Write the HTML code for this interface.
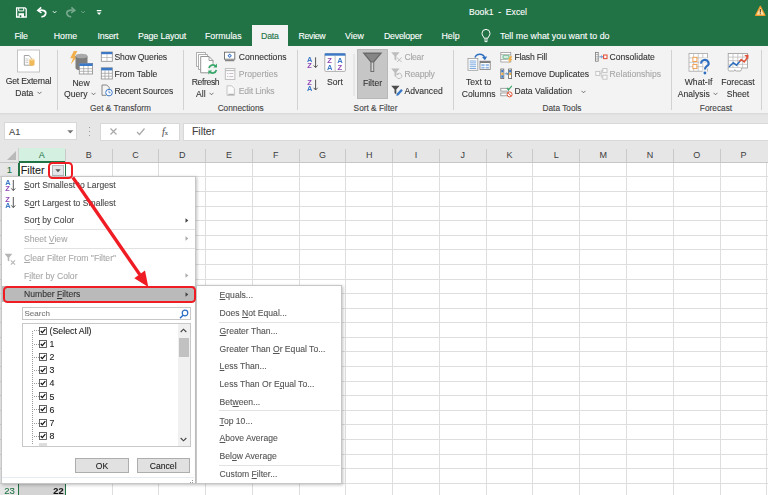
<!DOCTYPE html>
<html><head><meta charset="utf-8"><title>Excel Number Filters</title>
<style>
html,body{margin:0;padding:0}
body{width:768px;height:495px;overflow:hidden;position:relative;background:#fff;font-family:"Liberation Sans",sans-serif}
#r{position:absolute;left:-8px;top:-8px;width:784px;height:511px;filter:blur(0.3px)}
#i{position:absolute;left:8px;top:8px;width:768px;height:495px}
#i>div,#i>span,#i>svg{position:absolute;display:block}
.t{height:12px;line-height:12px;white-space:nowrap;-webkit-text-stroke:0.1px currentColor}
.ch{display:inline-block;vertical-align:1px;margin-left:1px}
u{text-decoration-thickness:0.6px;text-underline-offset:1px}
</style></head><body><div id="r"><div id="i">
<div style="left:-8px;top:-8px;width:784px;height:54.5px;background:#217346"></div>
<div style="left:252px;top:25px;width:36px;height:22px;background:#f3f3f3"></div>
<span class="t" style="left:14.5px;top:29.5px;font-size:8.8px;color:#fff;letter-spacing:-0.25px">File</span>
<span class="t" style="left:53.7px;top:29.5px;font-size:8.8px;color:#fff">Home</span>
<span class="t" style="left:97.5px;top:29.5px;font-size:8.8px;color:#fff;letter-spacing:-0.2px">Insert</span>
<span class="t" style="left:138px;top:29.5px;font-size:8.8px;color:#fff;letter-spacing:-0.12px">Page Layout</span>
<span class="t" style="left:205px;top:29.5px;font-size:8.8px;color:#fff">Formulas</span>
<span class="t" style="left:261px;top:29.5px;font-size:8.8px;color:#217346;letter-spacing:-0.2px">Data</span>
<span class="t" style="left:298.5px;top:29.5px;font-size:8.8px;color:#fff;letter-spacing:-0.33px">Review</span>
<span class="t" style="left:345px;top:29.5px;font-size:8.8px;color:#fff">View</span>
<span class="t" style="left:384px;top:29.5px;font-size:8.8px;color:#fff;letter-spacing:-0.23px">Developer</span>
<span class="t" style="left:441.5px;top:29.5px;font-size:8.8px;color:#fff">Help</span>
<span class="t" style="left:500px;top:29.5px;font-size:8.9px;color:#fff">Tell me what you want to do</span>
<span class="t" style="left:438.0px;width:120px;text-align:center;top:6.0px;font-size:8.6px;color:#fff">Book1&nbsp; -&nbsp; Excel</span>
<svg style="left:15px;top:6px" width="90" height="13" viewBox="15 6 90 13">
<g fill="none" stroke="#fff">
<path d="M16.600 7.800h8.400l1.200 1.200v8h-9.600z" stroke-width="1.300"/>
<path d="M18.700 8v2.900h5v-2.900" stroke-width="1"/>
<path d="M18.600 13.200h5.400v4h-5.400z" fill="#fff" stroke="none"/>
<path d="M19.800 15.200h1.500v2h-1.500z" fill="#217346" stroke="none"/>
<path d="M38.600 10.500C42.500 9.500 46.600 10.600 45.600 14C45 15.700 43.600 16.700 41.400 16.900" stroke-width="1.700"/>
<path d="M41.200 7.300L37.800 10.500L41.500 12.900" stroke-width="1.600"/>
<path d="M52.900 11.200l1.700 1.700l1.700-1.700" stroke-width="1"/>
<g opacity=".38">
<g transform="translate(-2.200 0)"><path d="M76.200 10.500C72.300 9.500 68.200 10.600 69.200 14C69.800 15.700 71.200 16.700 73.400 16.900" stroke-width="1.700"/>
<path d="M73.600 7.300L77 10.500L73.300 12.900" stroke-width="1.600"/></g>
<path d="M81.400 11.200l1.700 1.700l1.700-1.700" stroke-width="1"/>
</g>
</g>
<path d="M96.800 10.100h4.600v1.200h-4.600zM96.900 12.500h4.400l-2.200 2.400z" fill="#fff"/>
</svg>
<svg style="left:480px;top:28px" width="12" height="15" viewBox="0 0 12 15"><g fill="none" stroke="#fff" stroke-width="1"><path d="M4 10.2c0-1.6-2-2.4-2-4.8a4 4 0 0 1 8 0c0 2.400-2 3.200-2 4.800z"/><path d="M4.200 12h3.600M4.600 13.600h2.800"/></g></svg>
<svg style="left:754px;top:5px" width="13" height="12" viewBox="0 0 13 12"><path d="M6.300 1.300L11 10.300H1.600z" fill="#fbe0a2" stroke="#f29a2a" stroke-width="1.200" stroke-linejoin="round"/><path d="M5.800 4h1v3.600h-1zM5.800 8.200h1v1h-1z" fill="#3a3020"/></svg>
<div style="left:-8px;top:46px;width:784px;height:67.5px;background:#f3f3f3"></div>
<div style="left:-8px;top:113px;width:784px;height:1.5px;background:linear-gradient(#d8d8d8,#e2e2e2)"></div>
<div style="left:-8px;top:114.5px;width:784px;height:33px;background:#e6e6e6"></div>
<div style="left:57.0px;top:50px;width:1px;height:60px;background:#d2d2d2"></div>
<div style="left:183.2px;top:50px;width:1px;height:60px;background:#d2d2d2"></div>
<div style="left:297.0px;top:50px;width:1px;height:60px;background:#d2d2d2"></div>
<div style="left:453.2px;top:50px;width:1px;height:60px;background:#d2d2d2"></div>
<div style="left:671.0px;top:50px;width:1px;height:60px;background:#d2d2d2"></div>
<div style="left:761.2px;top:50px;width:1px;height:60px;background:#d2d2d2"></div>
<span class="t" style="left:60.5px;width:120px;text-align:center;top:101.5px;font-size:8.3px;color:#444">Get &amp; Transform</span>
<span class="t" style="left:180.7px;width:120px;text-align:center;top:101.5px;font-size:8.3px;color:#444">Connections</span>
<span class="t" style="left:315.5px;width:120px;text-align:center;top:101.5px;font-size:8.3px;color:#444">Sort &amp; Filter</span>
<span class="t" style="left:502.0px;width:120px;text-align:center;top:101.5px;font-size:8.3px;color:#444">Data Tools</span>
<span class="t" style="left:656.0px;width:120px;text-align:center;top:101.5px;font-size:8.3px;color:#444">Forecast</span>
<span class="t" style="left:-31.5px;width:120px;text-align:center;top:74.7px;font-size:8.6px;color:#333;letter-spacing:-0.19px">Get External</span>
<span class="t" style="left:-31.5px;width:120px;text-align:center;top:86.5px;font-size:8.6px;color:#333">Data <svg class="ch" width="5" height="4" viewBox="0 0 5 4"><path d="M0.500 0.800l2 2l2-2" fill="none" stroke="#555" stroke-width=".8"/></svg></span>
<span class="t" style="left:21.0px;width:120px;text-align:center;top:76.5px;font-size:8.6px;color:#333">New</span>
<span class="t" style="left:20.0px;width:120px;text-align:center;top:87.7px;font-size:8.6px;color:#333">Query <svg class="ch" width="5" height="4" viewBox="0 0 5 4"><path d="M0.500 0.800l2 2l2-2" fill="none" stroke="#555" stroke-width=".8"/></svg></span>
<span class="t" style="left:145.5px;width:120px;text-align:center;top:76.0px;font-size:8.6px;color:#333;letter-spacing:-0.38px">Refresh</span>
<span class="t" style="left:145.0px;width:120px;text-align:center;top:87.7px;font-size:8.6px;color:#333">All <svg class="ch" width="5" height="4" viewBox="0 0 5 4"><path d="M0.500 0.800l2 2l2-2" fill="none" stroke="#555" stroke-width=".8"/></svg></span>
<span class="t" style="left:275.0px;width:120px;text-align:center;top:76.0px;font-size:8.6px;color:#333">Sort</span>
<div style="left:357px;top:48.5px;width:31px;height:50.5px;background:#c6c6c6;border:1px solid #b8b8b8;box-sizing:border-box"></div>
<span class="t" style="left:312.5px;width:120px;text-align:center;top:76.5px;font-size:8.6px;color:#333">Filter</span>
<span class="t" style="left:418.7px;width:120px;text-align:center;top:76.0px;font-size:8.6px;color:#333">Text to</span>
<span class="t" style="left:418.7px;width:120px;text-align:center;top:87.7px;font-size:8.6px;color:#333">Columns</span>
<span class="t" style="left:638.6px;width:120px;text-align:center;top:76.0px;font-size:8.6px;color:#333">What-If</span>
<span class="t" style="left:638.0px;width:120px;text-align:center;top:88.0px;font-size:8.6px;color:#333">Analysis <svg class="ch" width="5" height="4" viewBox="0 0 5 4"><path d="M0.500 0.800l2 2l2-2" fill="none" stroke="#555" stroke-width=".8"/></svg></span>
<span class="t" style="left:678.0px;width:120px;text-align:center;top:76.0px;font-size:8.6px;color:#333">Forecast</span>
<span class="t" style="left:678.0px;width:120px;text-align:center;top:88.0px;font-size:8.6px;color:#333">Sheet</span>
<span class="t" style="left:114.5px;top:51.4px;font-size:8.6px;color:#333;letter-spacing:-0.12px">Show Queries</span>
<span class="t" style="left:114.5px;top:68.2px;font-size:8.6px;color:#333">From Table</span>
<span class="t" style="left:114.5px;top:85.2px;font-size:8.6px;color:#333;letter-spacing:-0.19px">Recent Sources</span>
<span class="t" style="left:238.7px;top:51.4px;font-size:8.6px;color:#333">Connections</span>
<span class="t" style="left:238.7px;top:68.3px;font-size:8.6px;color:#a6a6a6">Properties</span>
<span class="t" style="left:238.7px;top:85.3px;font-size:8.6px;color:#a6a6a6;letter-spacing:-0.15px">Edit Links</span>
<span class="t" style="left:404.5px;top:51.4px;font-size:8.6px;color:#a6a6a6;letter-spacing:-0.26px">Clear</span>
<span class="t" style="left:404.5px;top:68.3px;font-size:8.6px;color:#a6a6a6;letter-spacing:-0.2px">Reapply</span>
<span class="t" style="left:404.5px;top:85.3px;font-size:8.6px;color:#333">Advanced</span>
<span class="t" style="left:514.5px;top:51.4px;font-size:8.6px;color:#333;letter-spacing:-0.19px">Flash Fill</span>
<span class="t" style="left:514.5px;top:68.3px;font-size:8.6px;color:#333">Remove Duplicates</span>
<span class="t" style="left:514.5px;top:85.3px;font-size:8.6px;color:#333">Data Validation</span>
<svg style="left:580.5px;top:89.5px" width="5" height="4" viewBox="0 0 5 4"><path d="M0.500 0.800l2 2l2-2" fill="none" stroke="#555" stroke-width=".8"/></svg>
<span class="t" style="left:609.5px;top:51.4px;font-size:8.6px;color:#333">Consolidate</span>
<span class="t" style="left:609.5px;top:68.3px;font-size:8.6px;color:#a6a6a6">Relationships</span>
<svg style="left:0;top:46px" width="768" height="68" viewBox="0 46 768 68" font-family="Liberation Sans, sans-serif">
<!-- Get External Data -->
<rect x="17.500" y="50" width="22" height="22" fill="#fff" stroke="#c4c4c4" stroke-width="1"/>
<path d="M24.300 55.500h4.600l2.400 2.400v7.300h-7z" fill="#fff" stroke="#8a8a8a" stroke-width=".8"/>
<path d="M25.500 59h3M25.500 60.800h3M25.500 62.600h3" stroke="#b5b5b5" stroke-width=".7"/>
<path d="M29.300 59.600v5.200a2.600 1.100 0 0 0 5.200 0v-5.200z" fill="#f0b95a"/><ellipse cx="31.900" cy="59.600" rx="2.600" ry="1.100" fill="#f7d79a"/>
<!-- New Query -->
<path d="M73.800 51l3.600 0l-2.600 5h2.600l-6.600 8.500l2.200-6.200h-2.800z" fill="#f2b04c"/>
<path d="M75.500 56v12a6 2.300 0 0 0 12 0v-12z" fill="#7d7d7d"/><ellipse cx="81.500" cy="56" rx="6" ry="2.300" fill="#a9a9a9"/>
<rect x="79.300" y="63.400" width="13.300" height="10.600" fill="#fff" stroke="#8a8a8a" stroke-width=".8"/>
<rect x="79.300" y="63.400" width="13.300" height="2.600" fill="#3b78c6"/>
<path d="M79.300 68.700h13.300M79.300 71.300h13.300M83.700 66v8M88.100 66v8" stroke="#9a9a9a" stroke-width=".7"/>
<!-- Show Queries -->
<rect x="101.300" y="52" width="11" height="9.300" fill="#fff" stroke="#8a8a8a" stroke-width=".8"/>
<rect x="101.300" y="52" width="11" height="2.200" fill="#3b78c6"/>
<path d="M101.300 57.500h11M107 54.200v7" stroke="#b0b0b0" stroke-width=".7"/>
<!-- From Table -->
<rect x="101.300" y="67.800" width="11" height="11.200" fill="#fff" stroke="#8a8a8a" stroke-width=".8"/>
<rect x="101.300" y="67.800" width="11" height="2.600" fill="#3b78c6"/>
<path d="M101.300 73.300h11M101.300 76.200h11M105 70.400v8.600M108.700 70.400v8.600" stroke="#9a9a9a" stroke-width=".7"/>
<!-- Recent Sources -->
<path d="M102 85h4.800l2.400 2.400v2M102 85v10.300h4" fill="none" stroke="#7a7a7a" stroke-width=".9"/>
<circle cx="109" cy="92.600" r="3.300" fill="#fff" stroke="#3b78c6" stroke-width="1"/><path d="M109 90.600v2.200h1.600" fill="none" stroke="#3b78c6" stroke-width=".8"/>
<!-- Refresh All -->
<path d="M196.500 52.500h9v14h-9z" fill="#fff" stroke="#9a9a9a" stroke-width=".8"/>
<path d="M198.500 54.500h9v15h-9z" fill="#fff" stroke="#9a9a9a" stroke-width=".8"/>
<path d="M200.700 56.500h8.300l4 4v12.300h-12.300z" fill="#fff" stroke="#8a8a8a" stroke-width=".9"/>
<path d="M209 56.500v4h4" fill="none" stroke="#8a8a8a" stroke-width=".8"/>
<circle cx="212.700" cy="69" r="5.400" fill="#f3f3f3"/>
<path d="M209 68a3.900 3.900 0 0 1 6.800-1.600" fill="none" stroke="#3aa66a" stroke-width="1.700"/><path d="M217 63.600v3.800h-3.700z" fill="#3aa66a"/>
<path d="M216.400 70a3.900 3.900 0 0 1-6.800 1.600" fill="none" stroke="#3aa66a" stroke-width="1.700"/><path d="M208.400 74.400v-3.800h3.700z" fill="#3aa66a"/>
<!-- Connections -->
<rect x="224.500" y="52.200" width="10.300" height="7" fill="#fff" stroke="#6a6a6a" stroke-width=".9"/>
<path d="M225 60.700h9.300" stroke="#6a6a6a" stroke-width="1"/>
<path d="M229.700 53.500l2.200 2.200l-2.200 2.200l-2.200-2.200z" fill="#3b78c6"/><circle cx="229.700" cy="55.700" r=".8" fill="#fff"/>
<!-- Properties -->
<rect x="225.300" y="68.600" width="9.600" height="10.800" fill="#fafafa" stroke="#b9b9b9" stroke-width=".9"/>
<path d="M225.300 70.600h9.600" stroke="#b9b9b9" stroke-width="1"/>
<path d="M227 73.500h1.300M229.300 73.500h4M227 76.500h1.300M229.300 76.500h4" stroke="#c4b8c4" stroke-width=".9"/>
<!-- Edit Links -->
<path d="M227 85.800h4.600l2.800 2.800v6.800h-7.400z" fill="#fafafa" stroke="#c0c0c0" stroke-width=".9"/>
<path d="M228.300 94.300h2.200M231.600 94.300h2.200M229.700 94.300h2.600" stroke="#b0b0b0" stroke-width="1.300"/>
<!-- AZ / ZA -->
<g font-weight="bold" font-size="7.4">
<text x="306.9" y="62.2" fill="#3b78c6">A</text><text x="307.2" y="68.3" fill="#9148b5">Z</text>
<text x="307.2" y="84.600" fill="#9148b5">Z</text><text x="306.9" y="90.700" fill="#3b78c6">A</text>
</g>
<path d="M315.600 57.300v10.200M313.600 65.400l2 2.200l2-2.200M315.600 79.700v10.200M313.600 87.800l2 2.200l2-2.200" fill="none" stroke="#555" stroke-width="1"/>
<!-- Sort -->
<rect x="324.800" y="53.600" width="20.600" height="17.800" rx="1" fill="#fff" stroke="#9a9a9a" stroke-width=".8"/>
<rect x="324.800" y="53.300" width="20.600" height="2.400" fill="#3b78c6"/>
<path d="M335.100 55.700v15.700" stroke="#b0b0b0" stroke-width=".8"/>
<g font-weight="bold" font-size="7.6">
<text x="327.300" y="63.300" fill="#9148b5">Z</text><text x="327" y="70.100" fill="#3b78c6">A</text>
<text x="337.300" y="63.300" fill="#3b78c6">A</text><text x="337.600" y="70.100" fill="#9148b5">Z</text>
</g>
<path d="M354 54v42" stroke="#dcdcdc" stroke-width="1"/>
<!-- Filter funnel -->
<path d="M362.4 52.500h20l-8.200 9.800v9.700h-3.800v-9.700z" fill="#6a6a6a"/>
<path d="M365.400 54h14l-6.200 7.400h-1.600z" fill="#868686"/>
<path d="M371.500 62.500v8.600h1.800v-8.600z" fill="#d4d4d4"/>
<!-- small funnels -->
<g fill="#bdbdbd">
<path d="M391.200 52.200h8.400l-3.300 3.800v4.800l-1.800-1.300v-3.500z"/>
<path d="M391.200 68.600h8.400l-3.300 3.800v4.800l-1.800-1.300v-3.500z"/>
</g>
<path d="M397 57.500l4.600 4.600M401.600 57.500l-4.600 4.600" stroke="#bdbdbd" stroke-width="1" fill="none"/>
<path d="M396.600 77a2.700 2.700 0 1 0 1-3.300" fill="none" stroke="#bdbdbd" stroke-width="1"/><path d="M396.600 72.600v2.400h2.400z" fill="#bdbdbd"/>
<path d="M391.200 85.800h8.400l-3.300 3.800v4.800l-1.800-1.300v-3.500z" fill="#4d4d4d"/>
<path d="M396.300 96l0.600-2.400l4.200-4.600l1.700 1.600l-4.200 4.600z" fill="#3b78c6"/>
<!-- Text to Columns -->
<rect x="468" y="58.500" width="9.800" height="11.800" fill="#fff" stroke="#9a9a9a" stroke-width=".8"/>
<path d="M469.600 61h6.600M469.600 62.900h6.600M469.600 64.800h6.600M469.600 66.700h6.600M469.600 68.500h6.600" stroke="#5a93d6" stroke-width=".8"/>
<rect x="480" y="61.200" width="10.200" height="8.400" fill="#fff" stroke="#7a7a7a" stroke-width=".8"/>
<rect x="480" y="61.200" width="10.200" height="1.800" fill="#7a7a7a"/>
<rect x="481.300" y="64.200" width="3.300" height="1.700" fill="#8db5e4"/><rect x="485.600" y="64.200" width="3.300" height="1.700" fill="#8db5e4"/>
<rect x="481.300" y="66.800" width="3.300" height="1.700" fill="#8db5e4"/><rect x="485.600" y="66.800" width="3.300" height="1.700" fill="#8db5e4"/>
<path d="M475 57.500a5 4.600 0 0 1 9.600 0" fill="none" stroke="#2f6fc0" stroke-width="1.500"/>
<path d="M482 57l2.900 3.200l2.300-3.800z" fill="#2f6fc0"/>
<!-- Flash Fill -->
<rect x="500.800" y="52.400" width="10" height="9.600" fill="#fff" stroke="#9a9a9a" stroke-width=".8"/>
<path d="M500.800 54.600h10M500.800 59.500h7" stroke="#9a9a9a" stroke-width=".7"/>
<rect x="503" y="55.800" width="6" height="2.400" fill="#fff" stroke="#3aa66a" stroke-width=".8"/>
<path d="M509.800 56.200l2.600 0l-1.600 2.800h1.600l-4 4.800l1.200-3.400h-1.700z" fill="#f2b04c"/>
<!-- Remove Duplicates -->
<rect x="500.800" y="69" width="3" height="9.600" fill="#fff" stroke="#666" stroke-width=".8"/>
<rect x="508.600" y="69" width="3" height="9.600" fill="#fff" stroke="#666" stroke-width=".8"/>
<rect x="501.300" y="70" width="2" height="2.500" fill="#3b78c6"/><rect x="501.300" y="72.700" width="2" height="2.400" fill="#f2b04c"/><rect x="501.300" y="75.300" width="2" height="2.500" fill="#3b78c6"/>
<rect x="509.100" y="70" width="2" height="2.500" fill="#3b78c6"/><rect x="509.100" y="72.700" width="2" height="2.400" fill="#f2b04c"/>
<path d="M504.800 73.800h3M506.600 72.500l1.300 1.300l-1.300 1.300" fill="none" stroke="#3b78c6" stroke-width=".8"/>
<!-- Data Validation -->
<rect x="500.800" y="88.300" width="7.600" height="2.800" fill="#fff" stroke="#8a8a8a" stroke-width=".8"/>
<rect x="500.800" y="93" width="7.600" height="2.800" fill="#fff" stroke="#8a8a8a" stroke-width=".8"/>
<path d="M506.800 88l1.700 1.800l3.300-4" fill="none" stroke="#3aa66a" stroke-width="1.200"/>
<circle cx="509.600" cy="94.400" r="2.500" fill="#fff" stroke="#e0533a" stroke-width="1"/><path d="M507.900 92.700l3.400 3.400" stroke="#e0533a" stroke-width="1"/>
<!-- Consolidate -->
<rect x="595.600" y="52.400" width="2.600" height="8.800" fill="#fff" stroke="#7a7a7a" stroke-width=".8"/>
<path d="M595.600 54.600h2.600M595.600 56.800h2.600M595.600 59h2.600" stroke="#7a7a7a" stroke-width=".6"/>
<path d="M599.400 56.800h3M601.300 55.600l1.300 1.200l-1.300 1.200" fill="none" stroke="#3b78c6" stroke-width=".8"/>
<rect x="603.600" y="55" width="3.400" height="3.600" fill="#fff" stroke="#e0533a" stroke-width="1.100"/>
<!-- Relationships -->
<g fill="#fafafa" stroke="#c0c0c0" stroke-width=".9">
<rect x="595.800" y="71.400" width="4" height="4"/><rect x="602.800" y="68.600" width="4.200" height="4"/><rect x="602.800" y="75.200" width="4.200" height="4"/>
</g>
<path d="M599.800 73.400h1.500v-2.800h1.500M601.300 73.400v3.800h1.500" fill="none" stroke="#c0c0c0" stroke-width=".8"/>
<!-- What-If -->
<rect x="689" y="53.500" width="18.500" height="17.700" fill="#fff" stroke="#a6a6a6" stroke-width=".8"/>
<path d="M689 57.900h18.500M689 62.300h18.500M689 66.700h18.500M693.600 53.500v17.700M698.200 53.500v17.700M702.800 53.500v17.700" stroke="#b5b5b5" stroke-width=".7"/>
<rect x="692.900" y="57.300" width="4" height="4.200" fill="#fff" stroke="#f0a050" stroke-width="1"/>
<rect x="692.900" y="64.400" width="4" height="4.200" fill="#fff" stroke="#f0a050" stroke-width="1"/>
<path d="M701.200 63.600a3.700 3.400 0 1 1 5.600 2.600c-1.400 1-1.900 1.600-1.900 3.400v3.400" fill="none" stroke="#f3f3f3" stroke-width="4.400"/>
<path d="M701.200 63.600a3.700 3.400 0 1 1 5.600 2.600c-1.400 1-1.900 1.600-1.900 3.400" fill="none" stroke="#2f6fc0" stroke-width="2.100"/>
<circle cx="704.900" cy="73" r="1.400" fill="#2f6fc0"/>
<!-- Forecast Sheet -->
<rect x="728.200" y="53.500" width="19.300" height="14.500" fill="#fff" stroke="#9a9a9a" stroke-width=".8"/>
<path d="M728.200 57.100h19.300M728.200 60.700h19.300M728.200 64.300h19.300M733 53.500v14.500M737.800 53.500v14.500M742.600 53.500v14.500" stroke="#b5b5b5" stroke-width=".7"/>
<path d="M728.200 68v1.600q0 1.400 1.400 1.400h3.800q1.400 0 1.400-1.400q0 1.400 1.400 1.400h3.800q1.400 0 1.400-1.400v-1.600" fill="#fff" stroke="#9a9a9a" stroke-width=".8"/>
<path d="M729 67l4.300-4.200l3.200 2.400l3.600-4.300" fill="none" stroke="#2f6fc0" stroke-width="1.500"/>
<path d="M739.600 61.400l1.600-1.900l3 2.400l3.200-4.400" fill="none" stroke="#e0533a" stroke-width="1.500"/>
<path d="M744.300 55.100l4.300-.3l-.3 4.400z" fill="#e0533a"/>
</svg>

<div style="left:4px;top:122.3px;width:73px;height:18.2px;background:#fff;border:1px solid #d8d8d8;box-sizing:border-box"></div>
<span class="t" style="left:9px;top:125.5px;font-size:9.2px;color:#444">A1</span>
<svg style="left:67px;top:129.500px" width="7" height="4" viewBox="0 0 7 4"><path d="M0.300 0.300h6l-3 3.200z" fill="#777"/></svg>
<div style="left:88.5px;top:126.5px;width:1px;height:1.2px;background:#999"></div>
<div style="left:88.5px;top:130.5px;width:1px;height:1.2px;background:#999"></div>
<div style="left:88.5px;top:134.5px;width:1px;height:1.2px;background:#999"></div>
<div style="left:100px;top:122.5px;width:80px;height:18px;background:#fff;border:1px solid #d8d8d8;box-sizing:border-box"></div>
<svg style="left:108px;top:126.500px" width="70" height="10" viewBox="0 0 70 10"><g fill="none" stroke="#a8a8a8" stroke-width="1.200"><path d="M2.500 1.500l6 6M8.500 1.500l-6 6"/><path d="M29 5l2.500 2.500l5-6"/></g></svg>
<span class="t" style="left:162px;top:125.5px;font-size:10px;color:#555;font-family:'Liberation Serif',serif"><i>f</i><span style='font-size:6.500px'>x</span></span>
<div style="left:183px;top:122.5px;width:598px;height:18px;background:#fff;border:1px solid #d8d8d8;box-sizing:border-box"></div>
<span class="t" style="left:192px;top:125.5px;font-size:10.4px;color:#444">Filter</span>
<div style="left:-8px;top:147.5px;width:784px;height:355.5px;background:#fff"></div>
<div style="left:-8px;top:147.5px;width:784px;height:14.9px;background:#e6e6e6"></div>
<div style="left:-8px;top:147.5px;width:26.3px;height:355.5px;background:#e6e6e6"></div>
<div style="left:18.5px;top:148px;width:46.77px;height:14px;background:#d3f0e0"></div>
<div style="left:18.5px;top:161.2px;width:47.27px;height:1.6px;background:#217346"></div>
<span class="t" style="left:21.885000000000005px;width:40px;text-align:center;top:149.0px;font-size:9px;-webkit-text-stroke:0;color:#217346">A</span>
<span class="t" style="left:68.65500000000002px;width:40px;text-align:center;top:149.0px;font-size:9px;-webkit-text-stroke:0;color:#3c3c3c">B</span>
<div style="left:64.77000000000001px;top:149px;width:1px;height:13.4px;background:#c9c9c9"></div>
<span class="t" style="left:115.42500000000001px;width:40px;text-align:center;top:149.0px;font-size:9px;-webkit-text-stroke:0;color:#3c3c3c">C</span>
<div style="left:111.54px;top:149px;width:1px;height:13.4px;background:#c9c9c9"></div>
<span class="t" style="left:162.195px;width:40px;text-align:center;top:149.0px;font-size:9px;-webkit-text-stroke:0;color:#3c3c3c">D</span>
<div style="left:158.31px;top:149px;width:1px;height:13.4px;background:#c9c9c9"></div>
<span class="t" style="left:208.965px;width:40px;text-align:center;top:149.0px;font-size:9px;-webkit-text-stroke:0;color:#3c3c3c">E</span>
<div style="left:205.08px;top:149px;width:1px;height:13.4px;background:#c9c9c9"></div>
<span class="t" style="left:255.735px;width:40px;text-align:center;top:149.0px;font-size:9px;-webkit-text-stroke:0;color:#3c3c3c">F</span>
<div style="left:251.85000000000002px;top:149px;width:1px;height:13.4px;background:#c9c9c9"></div>
<span class="t" style="left:302.505px;width:40px;text-align:center;top:149.0px;font-size:9px;-webkit-text-stroke:0;color:#3c3c3c">G</span>
<div style="left:298.62px;top:149px;width:1px;height:13.4px;background:#c9c9c9"></div>
<span class="t" style="left:349.27500000000003px;width:40px;text-align:center;top:149.0px;font-size:9px;-webkit-text-stroke:0;color:#3c3c3c">H</span>
<div style="left:345.39000000000004px;top:149px;width:1px;height:13.4px;background:#c9c9c9"></div>
<span class="t" style="left:396.045px;width:40px;text-align:center;top:149.0px;font-size:9px;-webkit-text-stroke:0;color:#3c3c3c">I</span>
<div style="left:392.16px;top:149px;width:1px;height:13.4px;background:#c9c9c9"></div>
<span class="t" style="left:442.815px;width:40px;text-align:center;top:149.0px;font-size:9px;-webkit-text-stroke:0;color:#3c3c3c">J</span>
<div style="left:438.93px;top:149px;width:1px;height:13.4px;background:#c9c9c9"></div>
<span class="t" style="left:489.58500000000004px;width:40px;text-align:center;top:149.0px;font-size:9px;-webkit-text-stroke:0;color:#3c3c3c">K</span>
<div style="left:485.70000000000005px;top:149px;width:1px;height:13.4px;background:#c9c9c9"></div>
<span class="t" style="left:536.355px;width:40px;text-align:center;top:149.0px;font-size:9px;-webkit-text-stroke:0;color:#3c3c3c">L</span>
<div style="left:532.47px;top:149px;width:1px;height:13.4px;background:#c9c9c9"></div>
<span class="t" style="left:583.125px;width:40px;text-align:center;top:149.0px;font-size:9px;-webkit-text-stroke:0;color:#3c3c3c">M</span>
<div style="left:579.24px;top:149px;width:1px;height:13.4px;background:#c9c9c9"></div>
<span class="t" style="left:629.895px;width:40px;text-align:center;top:149.0px;font-size:9px;-webkit-text-stroke:0;color:#3c3c3c">N</span>
<div style="left:626.01px;top:149px;width:1px;height:13.4px;background:#c9c9c9"></div>
<span class="t" style="left:676.6650000000001px;width:40px;text-align:center;top:149.0px;font-size:9px;-webkit-text-stroke:0;color:#3c3c3c">O</span>
<div style="left:672.7800000000001px;top:149px;width:1px;height:13.4px;background:#c9c9c9"></div>
<span class="t" style="left:723.4350000000001px;width:40px;text-align:center;top:149.0px;font-size:9px;-webkit-text-stroke:0;color:#3c3c3c">P</span>
<div style="left:719.5500000000001px;top:149px;width:1px;height:13.4px;background:#c9c9c9"></div>
<div style="left:64.77000000000001px;top:163px;width:1px;height:341px;background:#dedede"></div>
<div style="left:111.54px;top:163px;width:1px;height:341px;background:#dedede"></div>
<div style="left:158.31px;top:163px;width:1px;height:341px;background:#dedede"></div>
<div style="left:205.08px;top:163px;width:1px;height:341px;background:#dedede"></div>
<div style="left:251.85000000000002px;top:163px;width:1px;height:341px;background:#dedede"></div>
<div style="left:298.62px;top:163px;width:1px;height:341px;background:#dedede"></div>
<div style="left:345.39000000000004px;top:163px;width:1px;height:341px;background:#dedede"></div>
<div style="left:392.16px;top:163px;width:1px;height:341px;background:#dedede"></div>
<div style="left:438.93px;top:163px;width:1px;height:341px;background:#dedede"></div>
<div style="left:485.70000000000005px;top:163px;width:1px;height:341px;background:#dedede"></div>
<div style="left:532.47px;top:163px;width:1px;height:341px;background:#dedede"></div>
<div style="left:579.24px;top:163px;width:1px;height:341px;background:#dedede"></div>
<div style="left:626.01px;top:163px;width:1px;height:341px;background:#dedede"></div>
<div style="left:672.7800000000001px;top:163px;width:1px;height:341px;background:#dedede"></div>
<div style="left:719.5500000000001px;top:163px;width:1px;height:341px;background:#dedede"></div>
<div style="left:766.32px;top:163px;width:1px;height:341px;background:#dedede"></div>
<div style="left:18.5px;top:176.48000000000002px;width:758px;height:1px;background:#dedede"></div>
<div style="left:-8px;top:176.48000000000002px;width:26.5px;height:1px;background:#cfcfcf"></div>
<div style="left:18.5px;top:191.06px;width:758px;height:1px;background:#dedede"></div>
<div style="left:-8px;top:191.06px;width:26.5px;height:1px;background:#cfcfcf"></div>
<div style="left:18.5px;top:205.64000000000001px;width:758px;height:1px;background:#dedede"></div>
<div style="left:-8px;top:205.64000000000001px;width:26.5px;height:1px;background:#cfcfcf"></div>
<div style="left:18.5px;top:220.22px;width:758px;height:1px;background:#dedede"></div>
<div style="left:-8px;top:220.22px;width:26.5px;height:1px;background:#cfcfcf"></div>
<div style="left:18.5px;top:234.8px;width:758px;height:1px;background:#dedede"></div>
<div style="left:-8px;top:234.8px;width:26.5px;height:1px;background:#cfcfcf"></div>
<div style="left:18.5px;top:249.38px;width:758px;height:1px;background:#dedede"></div>
<div style="left:-8px;top:249.38px;width:26.5px;height:1px;background:#cfcfcf"></div>
<div style="left:18.5px;top:263.96000000000004px;width:758px;height:1px;background:#dedede"></div>
<div style="left:-8px;top:263.96000000000004px;width:26.5px;height:1px;background:#cfcfcf"></div>
<div style="left:18.5px;top:278.54px;width:758px;height:1px;background:#dedede"></div>
<div style="left:-8px;top:278.54px;width:26.5px;height:1px;background:#cfcfcf"></div>
<div style="left:18.5px;top:293.12px;width:758px;height:1px;background:#dedede"></div>
<div style="left:-8px;top:293.12px;width:26.5px;height:1px;background:#cfcfcf"></div>
<div style="left:18.5px;top:307.70000000000005px;width:758px;height:1px;background:#dedede"></div>
<div style="left:-8px;top:307.70000000000005px;width:26.5px;height:1px;background:#cfcfcf"></div>
<div style="left:18.5px;top:322.28px;width:758px;height:1px;background:#dedede"></div>
<div style="left:-8px;top:322.28px;width:26.5px;height:1px;background:#cfcfcf"></div>
<div style="left:18.5px;top:336.86px;width:758px;height:1px;background:#dedede"></div>
<div style="left:-8px;top:336.86px;width:26.5px;height:1px;background:#cfcfcf"></div>
<div style="left:18.5px;top:351.44px;width:758px;height:1px;background:#dedede"></div>
<div style="left:-8px;top:351.44px;width:26.5px;height:1px;background:#cfcfcf"></div>
<div style="left:18.5px;top:366.02px;width:758px;height:1px;background:#dedede"></div>
<div style="left:-8px;top:366.02px;width:26.5px;height:1px;background:#cfcfcf"></div>
<div style="left:18.5px;top:380.6px;width:758px;height:1px;background:#dedede"></div>
<div style="left:-8px;top:380.6px;width:26.5px;height:1px;background:#cfcfcf"></div>
<div style="left:18.5px;top:395.18px;width:758px;height:1px;background:#dedede"></div>
<div style="left:-8px;top:395.18px;width:26.5px;height:1px;background:#cfcfcf"></div>
<div style="left:18.5px;top:409.76px;width:758px;height:1px;background:#dedede"></div>
<div style="left:-8px;top:409.76px;width:26.5px;height:1px;background:#cfcfcf"></div>
<div style="left:18.5px;top:424.34000000000003px;width:758px;height:1px;background:#dedede"></div>
<div style="left:-8px;top:424.34000000000003px;width:26.5px;height:1px;background:#cfcfcf"></div>
<div style="left:18.5px;top:438.91999999999996px;width:758px;height:1px;background:#dedede"></div>
<div style="left:-8px;top:438.91999999999996px;width:26.5px;height:1px;background:#cfcfcf"></div>
<div style="left:18.5px;top:453.5px;width:758px;height:1px;background:#dedede"></div>
<div style="left:-8px;top:453.5px;width:26.5px;height:1px;background:#cfcfcf"></div>
<div style="left:18.5px;top:468.08000000000004px;width:758px;height:1px;background:#dedede"></div>
<div style="left:-8px;top:468.08000000000004px;width:26.5px;height:1px;background:#cfcfcf"></div>
<div style="left:18.5px;top:482.65999999999997px;width:758px;height:1px;background:#dedede"></div>
<div style="left:-8px;top:482.65999999999997px;width:26.5px;height:1px;background:#cfcfcf"></div>
<div style="left:18.5px;top:497.24px;width:758px;height:9px;background:#dedede"></div>
<div style="left:-8px;top:497.24px;width:26.5px;height:9px;background:#cfcfcf"></div>
<div style="left:18.0px;top:147.5px;width:1px;height:355.5px;background:#cfcfcf"></div>
<div style="left:-8px;top:162px;width:784px;height:1px;background:#c6c6c6"></div>
<svg style="left:6px;top:150px" width="11" height="11" viewBox="0 0 11 11"><path d="M10 1v9H1z" fill="#b9b9b9"/></svg>
<span class="t" style="left:1.5px;width:16px;text-align:center;top:164.2px;font-size:9.6px;color:#217346">1</span>
<div style="left:17.5px;top:162.5px;width:1.6px;height:14.58px;background:#217346"></div>
<div style="left:18.7px;top:161.6px;width:47.57px;height:15.98px;border:1.600px solid #217346;box-sizing:border-box;background:#fff"></div>
<span class="t" style="left:20.8px;top:164.0px;font-size:10.7px;color:#1a1a1a">Filter</span>
<div style="left:51.8px;top:164.8px;width:12.4px;height:11.4px;background:#e4e6ea;border:1px solid #b5b8bd;box-sizing:border-box"></div>
<svg style="left:55px;top:169px" width="6" height="4" viewBox="0 0 6 4"><path d="M0.300 0.300h5.400l-2.700 3z" fill="#555"/></svg>
<div style="left:64px;top:161.5px;width:2.4px;height:2.6px;background:#217346"></div>
<div style="left:19.0px;top:483.65999999999997px;width:45.77px;height:22px;background:#d4d4d4"></div>
<span class="t" style="left:1.5px;width:16px;text-align:center;top:485.15999999999997px;font-size:9.6px;color:#217346">23</span>
<div style="left:17.5px;top:483.15999999999997px;width:1.6px;height:22px;background:#217346"></div>
<div style="left:64.97000000000001px;top:483.15999999999997px;width:1.5px;height:22px;background:#217346"></div>
<span class="t" style="left:33.5px;width:30px;text-align:right;top:485.15999999999997px;font-size:9.2px;color:#111;font-weight:bold">22</span>
<div style="left:0.5px;top:176px;width:195px;height:308.2px;background:#fff;border:1px solid #c6c6c6;box-sizing:border-box;box-shadow:1px 1px 3px rgba(0,0,0,.25)"></div>
<span class="t" style="left:24px;top:178.7px;font-size:8.6px;color:#4c4c4c"><u>S</u>ort Smallest to Largest</span>
<span class="t" style="left:24px;top:196.5px;font-size:8.6px;color:#4c4c4c">S<u>o</u>rt Largest to Smallest</span>
<span class="t" style="left:24px;top:214.4px;font-size:8.6px;color:#4c4c4c">Sor<u>t</u> by Color</span>
<div style="left:24px;top:229px;width:170.5px;height:1px;background:#e2e2e2"></div>
<span class="t" style="left:24px;top:232.7px;font-size:8.6px;color:#a8a8a8">Sheet <u>V</u>iew</span>
<div style="left:24px;top:248.3px;width:170.5px;height:1px;background:#e2e2e2"></div>
<span class="t" style="left:24px;top:252.3px;font-size:8.6px;color:#a8a8a8"><u>C</u>lear Filter From "Filter"</span>
<span class="t" style="left:24px;top:269.8px;font-size:8.6px;color:#a8a8a8">F<u>i</u>lter by Color</span>
<div style="left:1.5px;top:286.3px;width:193px;height:16px;background:#bababa"></div>
<span class="t" style="left:24px;top:288.2px;font-size:8.6px;color:#333">Number <u>F</u>ilters</span>
<svg style="left:184.500px;top:217.9px" width="4" height="5" viewBox="0 0 4 5"><path d="M0.500 0.300l2.800 2.200l-2.800 2.200z" fill="#444"/></svg>
<svg style="left:184.500px;top:236.2px" width="4" height="5" viewBox="0 0 4 5"><path d="M0.500 0.300l2.800 2.200l-2.800 2.200z" fill="#aaa"/></svg>
<svg style="left:184.500px;top:273.3px" width="4" height="5" viewBox="0 0 4 5"><path d="M0.500 0.300l2.800 2.200l-2.800 2.200z" fill="#aaa"/></svg>
<svg style="left:184.500px;top:291.7px" width="4" height="5" viewBox="0 0 4 5"><path d="M0.500 0.300l2.800 2.200l-2.800 2.200z" fill="#444"/></svg>
<svg style="left:4.6px;top:178.8px" width="14" height="14" viewBox="0 0 14 14"><text x="0.200" y="6.200" font-family="Liberation Sans, sans-serif" font-size="7.400" font-weight="bold" fill="#3b78c6">A</text><text x="0.200" y="12.200" font-family="Liberation Sans, sans-serif" font-size="7.400" font-weight="bold" fill="#9148b5">Z</text><path d="M8.300 1v10.500M6.300 9.400l2 2.200l2-2.200" fill="none" stroke="#555" stroke-width="1"/></svg>
<svg style="left:4.6px;top:196.3px" width="14" height="14" viewBox="0 0 14 14"><text x="0.200" y="6.200" font-family="Liberation Sans, sans-serif" font-size="7.400" font-weight="bold" fill="#9148b5">Z</text><text x="0.200" y="12.200" font-family="Liberation Sans, sans-serif" font-size="7.400" font-weight="bold" fill="#3b78c6">A</text><path d="M8.300 1v10.500M6.300 9.400l2 2.200l2-2.200" fill="none" stroke="#555" stroke-width="1"/></svg>
<svg style="left:4.200px;top:253.200px" width="12.600" height="12.600" viewBox="0 0 12 12"><path d="M0.500 0.800h7.500l-3 3.400v4l-1.500-1v-3z" fill="#b5b5b5"/><path d="M6.500 7l4 4M10.500 7l-4 4" stroke="#b5b5b5" stroke-width="1" fill="none"/></svg>
<div style="left:22px;top:306.6px;width:168.5px;height:13.8px;background:#fff;border:1px solid #c8c8c8;box-sizing:border-box"></div>
<span class="t" style="left:24.5px;top:307.5px;font-size:8px;color:#777">Search</span>
<svg style="left:178.500px;top:308.500px" width="10" height="10" viewBox="0 0 10 10"><circle cx="6" cy="4" r="2.800" fill="none" stroke="#2b6cc4" stroke-width="1.200"/><path d="M4 6.200l-3 3" stroke="#2b6cc4" stroke-width="1.500"/></svg>
<div style="left:22px;top:323.3px;width:168.5px;height:123.5px;background:#fff;border:1px solid #c8c8c8;box-sizing:border-box"></div>
<div style="left:32px;top:331px;width:1px;height:114px;background:repeating-linear-gradient(#9a9a9a 0 1px,transparent 1px 2px)"></div>
<div style="left:33px;top:330px;width:6px;height:1px;background:repeating-linear-gradient(90deg,transparent 0 1px,#9a9a9a 1px 2px)"></div>
<svg style="left:38.500px;top:326.5px" width="8" height="8" viewBox="0 0 8 8"><rect x=".5" y=".5" width="7" height="7" fill="#fff" stroke="#555" stroke-width=".9"/><path d="M1.800 4l1.500 1.700l3-3.600" fill="none" stroke="#111" stroke-width="1.200"/></svg>
<span class="t" style="left:49.5px;top:324.8px;font-size:8.8px;color:#222">(Select All)</span>
<div style="left:33px;top:344px;width:6px;height:1px;background:repeating-linear-gradient(90deg,transparent 0 1px,#9a9a9a 1px 2px)"></div>
<svg style="left:38.500px;top:339.65px" width="8" height="8" viewBox="0 0 8 8"><rect x=".5" y=".5" width="7" height="7" fill="#fff" stroke="#555" stroke-width=".9"/><path d="M1.800 4l1.500 1.700l3-3.600" fill="none" stroke="#111" stroke-width="1.200"/></svg>
<span class="t" style="left:49.5px;top:337.95px;font-size:8.8px;color:#222">1</span>
<div style="left:33px;top:357px;width:6px;height:1px;background:repeating-linear-gradient(90deg,transparent 0 1px,#9a9a9a 1px 2px)"></div>
<svg style="left:38.500px;top:352.8px" width="8" height="8" viewBox="0 0 8 8"><rect x=".5" y=".5" width="7" height="7" fill="#fff" stroke="#555" stroke-width=".9"/><path d="M1.800 4l1.500 1.700l3-3.600" fill="none" stroke="#111" stroke-width="1.200"/></svg>
<span class="t" style="left:49.5px;top:351.1px;font-size:8.8px;color:#222">2</span>
<div style="left:33px;top:370px;width:6px;height:1px;background:repeating-linear-gradient(90deg,transparent 0 1px,#9a9a9a 1px 2px)"></div>
<svg style="left:38.500px;top:365.95px" width="8" height="8" viewBox="0 0 8 8"><rect x=".5" y=".5" width="7" height="7" fill="#fff" stroke="#555" stroke-width=".9"/><path d="M1.800 4l1.500 1.700l3-3.600" fill="none" stroke="#111" stroke-width="1.200"/></svg>
<span class="t" style="left:49.5px;top:364.25px;font-size:8.8px;color:#222">3</span>
<div style="left:33px;top:383px;width:6px;height:1px;background:repeating-linear-gradient(90deg,transparent 0 1px,#9a9a9a 1px 2px)"></div>
<svg style="left:38.500px;top:379.1px" width="8" height="8" viewBox="0 0 8 8"><rect x=".5" y=".5" width="7" height="7" fill="#fff" stroke="#555" stroke-width=".9"/><path d="M1.800 4l1.500 1.700l3-3.600" fill="none" stroke="#111" stroke-width="1.200"/></svg>
<span class="t" style="left:49.5px;top:377.40000000000003px;font-size:8.8px;color:#222">4</span>
<div style="left:33px;top:396px;width:6px;height:1px;background:repeating-linear-gradient(90deg,transparent 0 1px,#9a9a9a 1px 2px)"></div>
<svg style="left:38.500px;top:392.25px" width="8" height="8" viewBox="0 0 8 8"><rect x=".5" y=".5" width="7" height="7" fill="#fff" stroke="#555" stroke-width=".9"/><path d="M1.800 4l1.500 1.700l3-3.600" fill="none" stroke="#111" stroke-width="1.200"/></svg>
<span class="t" style="left:49.5px;top:390.55px;font-size:8.8px;color:#222">5</span>
<div style="left:33px;top:409px;width:6px;height:1px;background:repeating-linear-gradient(90deg,transparent 0 1px,#9a9a9a 1px 2px)"></div>
<svg style="left:38.500px;top:405.4px" width="8" height="8" viewBox="0 0 8 8"><rect x=".5" y=".5" width="7" height="7" fill="#fff" stroke="#555" stroke-width=".9"/><path d="M1.800 4l1.500 1.700l3-3.600" fill="none" stroke="#111" stroke-width="1.200"/></svg>
<span class="t" style="left:49.5px;top:403.7px;font-size:8.8px;color:#222">6</span>
<div style="left:33px;top:423px;width:6px;height:1px;background:repeating-linear-gradient(90deg,transparent 0 1px,#9a9a9a 1px 2px)"></div>
<svg style="left:38.500px;top:418.55px" width="8" height="8" viewBox="0 0 8 8"><rect x=".5" y=".5" width="7" height="7" fill="#fff" stroke="#555" stroke-width=".9"/><path d="M1.800 4l1.500 1.700l3-3.600" fill="none" stroke="#111" stroke-width="1.200"/></svg>
<span class="t" style="left:49.5px;top:416.85px;font-size:8.8px;color:#222">7</span>
<div style="left:33px;top:436px;width:6px;height:1px;background:repeating-linear-gradient(90deg,transparent 0 1px,#9a9a9a 1px 2px)"></div>
<svg style="left:38.500px;top:431.7px" width="8" height="8" viewBox="0 0 8 8"><rect x=".5" y=".5" width="7" height="7" fill="#fff" stroke="#555" stroke-width=".9"/><path d="M1.800 4l1.500 1.700l3-3.600" fill="none" stroke="#111" stroke-width="1.200"/></svg>
<span class="t" style="left:49.5px;top:430.0px;font-size:8.8px;color:#222">8</span>
<div style="left:38.5px;top:443px;width:8px;height:3px;background:#ddd"></div>
<div style="left:177.5px;top:324.3px;width:12px;height:121.5px;background:#f0f0f0"></div>
<svg style="left:180px;top:328px" width="7" height="5" viewBox="0 0 7 5"><path d="M0.700 4l2.800-2.800l2.800 2.800" fill="none" stroke="#444" stroke-width="1.100"/></svg>
<svg style="left:179.800px;top:436.800px" width="7" height="5" viewBox="0 0 7 5"><path d="M0.700 1l2.800 2.800l2.800-2.800" fill="none" stroke="#444" stroke-width="1.100"/></svg>
<div style="left:178.5px;top:337.5px;width:10px;height:19px;background:#c1c1c1"></div>
<div style="left:75px;top:458.2px;width:53.6px;height:14.5px;background:#e1e1e1;border:1px solid #adadad;box-sizing:border-box"></div>
<span class="t" style="left:82.0px;width:40px;text-align:center;top:459.5px;font-size:8.6px;color:#222">OK</span>
<div style="left:136.5px;top:458.2px;width:53.3px;height:14.5px;background:#e1e1e1;border:1px solid #adadad;box-sizing:border-box"></div>
<span class="t" style="left:138.2px;width:50px;text-align:center;top:459.5px;font-size:8.6px;color:#222">Cancel</span>
<div style="left:1.5px;top:477.2px;width:192px;height:1px;background:#e6ecf2"></div>
<div style="left:189.5px;top:481.5px;width:1.2px;height:1.2px;background:#999"></div>
<div style="left:191.5px;top:481.5px;width:1.2px;height:1.2px;background:#999"></div>
<div style="left:191.5px;top:479.5px;width:1.2px;height:1.2px;background:#999"></div>
<div style="left:195.5px;top:284.5px;width:146px;height:199.7px;background:#fff;border:1px solid #c6c6c6;box-sizing:border-box;box-shadow:1px 1px 3px rgba(0,0,0,.25)"></div>
<span class="t" style="left:219.6px;top:289.0px;font-size:8.6px;color:#555"><u>E</u>quals...</span>
<span class="t" style="left:219.6px;top:306.6px;font-size:8.6px;color:#555">Does <u>N</u>ot Equal...</span>
<span class="t" style="left:219.6px;top:325.0px;font-size:8.6px;color:#555"><u>G</u>reater Than...</span>
<span class="t" style="left:219.6px;top:342.7px;font-size:8.6px;color:#555">Greater Than <u>O</u>r Equal To...</span>
<span class="t" style="left:219.6px;top:360.0px;font-size:8.6px;color:#555"><u>L</u>ess Than...</span>
<span class="t" style="left:219.6px;top:378.0px;font-size:8.6px;color:#555">Less Than Or E<u>q</u>ual To...</span>
<span class="t" style="left:219.6px;top:395.7px;font-size:8.6px;color:#555">Bet<u>w</u>een...</span>
<span class="t" style="left:219.6px;top:415.0px;font-size:8.6px;color:#555"><u>T</u>op 10...</span>
<span class="t" style="left:219.6px;top:432.3px;font-size:8.6px;color:#555"><u>A</u>bove Average</span>
<span class="t" style="left:219.6px;top:450.0px;font-size:8.6px;color:#555">Bel<u>o</u>w Average</span>
<span class="t" style="left:219.6px;top:468.0px;font-size:8.6px;color:#555">Custom <u>F</u>ilter...</span>
<div style="left:219px;top:321.5px;width:121px;height:1px;background:#e2e2e2"></div>
<div style="left:219px;top:409.9px;width:121px;height:1px;background:#e2e2e2"></div>
<div style="left:219px;top:464.5px;width:121px;height:1px;background:#e2e2e2"></div>
<div style="left:48.300px;top:162px;width:24.600px;height:16.600px;border:2.400px solid #f01c24;border-radius:4.500px;box-sizing:border-box"></div>
<div style="left:3.200px;top:285.600px;width:193.200px;height:17.400px;border:2.400px solid #f01c24;border-radius:4.500px;box-sizing:border-box"></div>
<svg style="left:0;top:0" width="768" height="495" viewBox="0 0 768 495"><path d="M72.8 177.4L140 274.9" stroke="#f01c24" stroke-width="3.4" fill="none"/><path d="M148.3 287L134.3 278.2L145 270.6z" fill="#f01c24"/></svg>
</div></div></body></html>
